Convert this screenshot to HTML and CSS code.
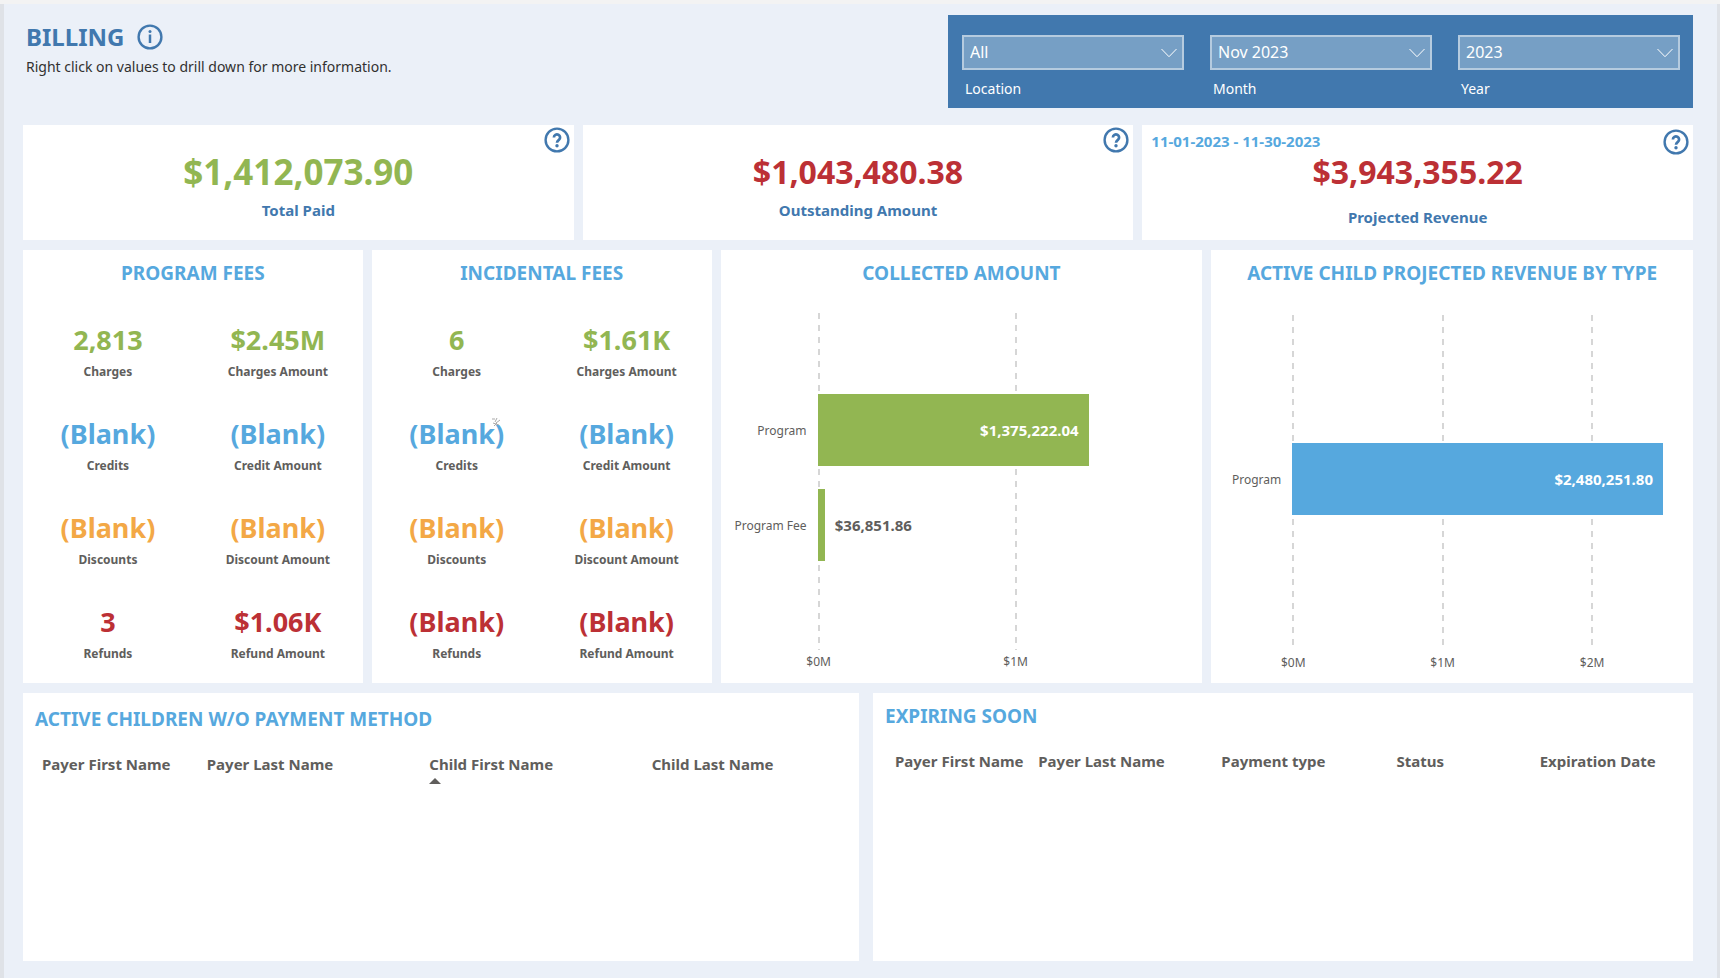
FILE: index.html
```html
<!DOCTYPE html>
<html lang="en">
<head>
<meta charset="utf-8">
<title>Billing</title>
<link rel="stylesheet" href="styles.css">
</head>
<body>
<svg class="sprite" aria-hidden="true">
  <symbol id="help" viewBox="0 0 26 26">
    <circle cx="13" cy="13" r="11.4" fill="none" stroke="currentColor" stroke-width="2.4"/>
    <path d="M9.900 10.400a3.100 3.100 0 1 1 5 2.500c-1.200.9-1.900 1.400-1.900 2.900" fill="none" stroke="currentColor" stroke-width="2.700"/>
    <circle cx="13" cy="18.800" r="1.700" fill="currentColor"/>
  </symbol>
  <symbol id="info" viewBox="0 0 26 26">
    <circle cx="13" cy="13" r="11.4" fill="none" stroke="currentColor" stroke-width="2.4"/>
    <path d="M13 10.500v8.500" fill="none" stroke="currentColor" stroke-width="2.500"/>
    <circle cx="13" cy="7.600" r="1.500" fill="currentColor"/>
  </symbol>
</svg>
<main class="report">
  <header class="top">
    <div class="heading">
      <div class="heading-line">
        <h1>BILLING</h1>
        <button class="icon-button" type="button" aria-label="Information"><svg class="icon"><use href="#info"/></svg></button>
      </div>
      <p class="hint">Right click on values to drill down for more information.</p>
    </div>
    <form class="filters">
      <div class="filter">
        <div class="select-box">
          <select id="location"><option>All</option></select>
          <svg class="chevron" viewBox="0 0 16 10"><path d="M.5 1 8 8.700 15.500 1"/></svg>
        </div>
        <label for="location">Location</label>
      </div>
      <div class="filter">
        <div class="select-box">
          <select id="month"><option>Nov 2023</option></select>
          <svg class="chevron" viewBox="0 0 16 10"><path d="M.5 1 8 8.700 15.500 1"/></svg>
        </div>
        <label for="month">Month</label>
      </div>
      <div class="filter">
        <div class="select-box">
          <select id="year"><option>2023</option></select>
          <svg class="chevron" viewBox="0 0 16 10"><path d="M.5 1 8 8.700 15.500 1"/></svg>
        </div>
        <label for="year">Year</label>
      </div>
    </form>
  </header>

  <section class="totals">
    <article class="card total green">
      <button class="icon-button corner" type="button" aria-label="Help: total paid"><svg class="icon"><use href="#help"/></svg></button>
      <p class="total-value large">$1,412,073.90</p>
      <h2 class="total-label">Total Paid</h2>
    </article>
    <article class="card total red">
      <button class="icon-button corner" type="button" aria-label="Help: outstanding amount"><svg class="icon"><use href="#help"/></svg></button>
      <p class="total-value">$1,043,480.38</p>
      <h2 class="total-label">Outstanding Amount</h2>
    </article>
    <article class="card total red dated">
      <button class="icon-button corner" type="button" aria-label="Help: projected revenue"><svg class="icon"><use href="#help"/></svg></button>
      <p class="period">11-01-2023 - 11-30-2023</p>
      <p class="total-value">$3,943,355.22</p>
      <h2 class="total-label">Projected Revenue</h2>
    </article>
  </section>

  <section class="middle">
    <article class="card fees">
      <h2 class="title">PROGRAM FEES</h2>
      <dl class="metrics">
        <div class="metric green"><dd>2,813</dd><dt>Charges</dt></div>
        <div class="metric green"><dd>$2.45M</dd><dt>Charges Amount</dt></div>
        <div class="metric blue"><dd>(Blank)</dd><dt>Credits</dt></div>
        <div class="metric blue"><dd>(Blank)</dd><dt>Credit Amount</dt></div>
        <div class="metric orange"><dd>(Blank)</dd><dt>Discounts</dt></div>
        <div class="metric orange"><dd>(Blank)</dd><dt>Discount Amount</dt></div>
        <div class="metric red"><dd>3</dd><dt>Refunds</dt></div>
        <div class="metric red"><dd>$1.06K</dd><dt>Refund Amount</dt></div>
      </dl>
    </article>
    <article class="card fees">
      <h2 class="title">INCIDENTAL FEES</h2>
      <dl class="metrics">
        <div class="metric green"><dd>6</dd><dt>Charges</dt></div>
        <div class="metric green"><dd>$1.61K</dd><dt>Charges Amount</dt></div>
        <div class="metric blue"><dd>(Blank)<svg class="busy" viewBox="0 0 8 8"><path d="M0 1h3M5 0 3 4M8 2 4 5M1 5l6 2M2 8l3-3"/></svg></dd><dt>Credits</dt></div>
        <div class="metric blue"><dd>(Blank)</dd><dt>Credit Amount</dt></div>
        <div class="metric orange"><dd>(Blank)</dd><dt>Discounts</dt></div>
        <div class="metric orange"><dd>(Blank)</dd><dt>Discount Amount</dt></div>
        <div class="metric red"><dd>(Blank)</dd><dt>Refunds</dt></div>
        <div class="metric red"><dd>(Blank)</dd><dt>Refund Amount</dt></div>
      </dl>
    </article>
    <article class="card chart collected">
      <h2 class="title">COLLECTED AMOUNT</h2>
      <div class="plot">
        <div class="gridline" style="left:0%"><span>$0M</span></div>
        <div class="gridline" style="left:57.5%"><span>$1M</span></div>
        <div class="bar-row"><span class="category">Program</span><div class="bar" style="width:79.1%"><span class="bar-value">$1,375,222.04</span></div></div>
        <div class="bar-row"><span class="category">Program Fee</span><div class="bar" style="width:2.1%"></div><span class="bar-value outside">$36,851.86</span></div>
      </div>
    </article>
    <article class="card chart projected">
      <h2 class="title">ACTIVE CHILD PROJECTED REVENUE BY TYPE</h2>
      <div class="plot">
        <div class="gridline" style="left:0%"><span>$0M</span></div>
        <div class="gridline" style="left:40.3%"><span>$1M</span></div>
        <div class="gridline" style="left:80.6%"><span>$2M</span></div>
        <div class="bar-row"><span class="category">Program</span><div class="bar" style="width:100%"><span class="bar-value">$2,480,251.80</span></div></div>
      </div>
    </article>
  </section>

  <section class="bottom">
    <article class="card listing children">
      <h2 class="title">ACTIVE CHILDREN W/O PAYMENT METHOD</h2>
      <table>
        <colgroup><col class="w-20"><col class="w-27"><col class="w-27"><col></colgroup>
        <thead><tr>
          <th scope="col">Payer First Name</th>
          <th scope="col">Payer Last Name</th>
          <th scope="col" aria-sort="ascending">Child First Name<svg class="sort" viewBox="0 0 12 6"><path d="M0 6 6 0l6 6z"/></svg></th>
          <th scope="col">Child Last Name</th>
        </tr></thead>
      </table>
    </article>
    <article class="card listing expiring">
      <h2 class="title">EXPIRING SOON</h2>
      <table>
        <colgroup><col class="w-18"><col class="w-23"><col class="w-22"><col class="w-18"><col></colgroup>
        <thead><tr>
          <th scope="col">Payer First Name</th>
          <th scope="col">Payer Last Name</th>
          <th scope="col">Payment type</th>
          <th scope="col">Status</th>
          <th scope="col">Expiration Date</th>
        </tr></thead>
      </table>
    </article>
  </section>
</main>
</body>
</html>
```
FILE: styles.css
```css
* { box-sizing: border-box; }

body {
  margin: 0;
  border-top: 4px solid #f3f3f3;
  background: #dfe2e7;
  font-family: "Noto Sans", "Open Sans", sans-serif;
  color: #605e5c;
}

h1, h2, p, dl, dd { margin: 0; }

.sprite { position: absolute; width: 0; height: 0; }

.report {
  display: flex;
  flex-direction: column;
  gap: 10px;
  min-height: calc(100vh - 4px);
  margin: 0 3px 0 4px;
  padding: 11px 24px 17px 19px;
  background: #ebf0f8;
}

.card { background: #fff; }

.green { color: #92b652; }
.blue { color: #56a8de; }
.orange { color: #f3a846; }
.red { color: #bc3035; }

.top {
  display: flex;
  justify-content: space-between;
  align-items: flex-start;
  margin-bottom: 7px;
}

.heading { padding: 4px 3px; }
.heading-line { display: flex; align-items: center; gap: 13px; }

h1 {
  color: #4178ae;
  font-size: 24px;
  line-height: 36px;
}

.hint {
  color: #323130;
  font-size: 14px;
  line-height: 24px;
}

.icon-button {
  display: block;
  padding: 0;
  border: 0;
  background: none;
  color: #4178ae;
}

.icon { display: block; width: 26px; height: 26px; }

.filters {
  display: grid;
  grid-template-columns: repeat(3, 1fr);
  gap: 26px;
  width: 745px;
  padding: 20px 13px 8px 14px;
  background: #4178ae;
}

.select-box { position: relative; }

.select-box select {
  display: block;
  width: 100%;
  height: 35px;
  padding: 0 6px;
  border: 2px solid #b5cbdf;
  border-radius: 0;
  background: #769fc5;
  color: #fff;
  font: 16px/31px "Noto Sans", sans-serif;
  appearance: none;
}

.chevron {
  position: absolute;
  top: 13px;
  right: 7px;
  width: 16px;
  height: 10px;
  fill: none;
  stroke: #fff;
  pointer-events: none;
}

.filter label {
  display: block;
  padding: 8px 3px 0;
  color: #fff;
  font-size: 14px;
  line-height: 22px;
}

.totals {
  display: grid;
  grid-template-columns: repeat(3, 1fr);
  gap: 9px;
}

.total {
  position: relative;
  min-height: 115px;
  padding-top: 24px;
  text-align: center;
}

.corner { position: absolute; top: 2px; right: 4px; }

.total-value {
  font-size: 32px;
  font-weight: 700;
  line-height: 46px;
}

.total-value.large { font-size: 35px; }

.total-label {
  color: #4178ae;
  font-size: 15px;
  line-height: 30px;
}

.dated { padding-top: 6px; }
.dated .corner { top: 4px; }
.dated .total-value { line-height: 42px; }
.dated .total-label { padding-top: 9px; }

.period {
  padding-left: 9px;
  color: #56a8de;
  font-size: 15px;
  font-weight: 700;
  line-height: 20px;
  text-align: left;
}

.title {
  color: #56a8de;
  font-size: 19px;
  line-height: 28px;
}

.middle {
  display: grid;
  grid-template-columns: 340fr 340fr 482fr 482fr;
  gap: 9px;
  min-height: 433px;
}

.middle .title { padding-top: 9px; text-align: center; }

.metrics {
  display: grid;
  grid-template-columns: 1fr 1fr;
  row-gap: 30px;
  padding-top: 35px;
}

.metric { text-align: center; }

.metric {
  display: flex;
  flex-direction: column;
  align-items: center;
}

.metric dd {
  position: relative;
  font-size: 27px;
  font-weight: 700;
  line-height: 36px;
}

.metric dt {
  color: #605e5c;
  font-size: 12px;
  font-weight: 700;
  line-height: 28px;
}

.busy {
  position: absolute;
  top: 2px;
  right: 4px;
  width: 8px;
  height: 8px;
  fill: none;
  stroke: #a9a9a9;
}

.chart { display: flex; flex-direction: column; }

.plot {
  position: relative;
  display: flex;
  flex: 1;
  flex-direction: column;
  justify-content: center;
  gap: 23px;
  margin: 26px 42px 33px 97px;
  padding-bottom: 8px;
}

.projected .plot { margin: 28px 30px 32px 81px; }

.gridline {
  position: absolute;
  top: 0;
  bottom: 0;
  width: 2px;
  background: repeating-linear-gradient(#d6d6d6 0 6px, transparent 6px 12px);
}

.gridline span {
  position: absolute;
  top: 100%;
  left: 50%;
  padding-top: 2px;
  font-size: 12px;
  line-height: 20px;
  transform: translateX(-50%);
}

.bar-row {
  position: relative;
  display: flex;
  align-items: center;
  font-size: 12px;
}

.category {
  position: absolute;
  right: 100%;
  padding-right: 11px;
  white-space: nowrap;
}

.bar {
  display: flex;
  align-items: center;
  justify-content: flex-end;
  height: 72px;
}

.collected .bar { background: #92b652; }
.projected .bar { background: #56a8de; }

.bar-value {
  padding: 0 10px;
  color: #fff;
  font-size: 15px;
  font-weight: 700;
}

.bar-value.outside { color: #605e5c; }

.bottom {
  display: grid;
  flex: 1;
  grid-template-columns: 836fr 820fr;
  gap: 14px;
}

.listing { padding: 12px; }
.children { padding-right: 0; }
.expiring { padding-top: 9px; }

.listing table {
  width: 100%;
  margin-top: 17px;
  border-collapse: collapse;
  table-layout: fixed;
}

.listing th {
  padding: 0 0 0 7px;
  font-size: 15px;
  line-height: 28px;
  text-align: left;
  vertical-align: top;
  white-space: nowrap;
}

.expiring th { padding-left: 10px; }

.listing .w-18 { width: 18%; }
.listing .w-20 { width: 20%; }
.listing .w-22 { width: 22%; }
.listing .w-23 { width: 23%; }
.listing .w-27 { width: 27%; }

.sort { display: block; width: 12px; height: 6px; fill: #605e5c; }
```
